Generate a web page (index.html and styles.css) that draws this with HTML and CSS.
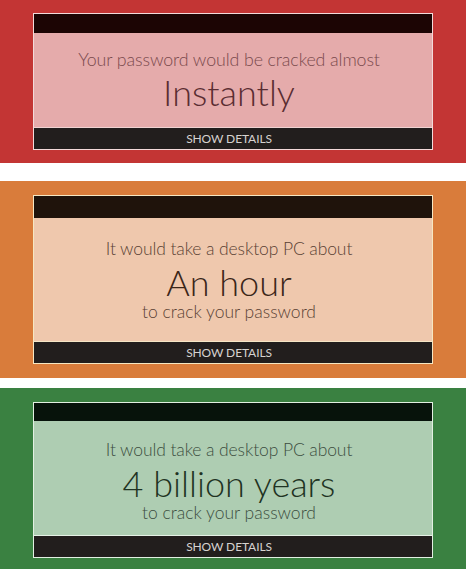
FILE: index.html
```html
<!DOCTYPE html>
<html>
<head>
<meta charset="utf-8">
<link rel="stylesheet" href="styles.css">
</head>
<body>
<section class="band band-red">
  <div class="card">
    <div class="card-top"></div>
    <div class="card-body">
      <p class="lead">Your password would be cracked almost</p>
      <p class="big">Instantly</p>
    </div>
    <div class="card-foot">SHOW DETAILS</div>
  </div>
</section>
<section class="band band-orange">
  <div class="card">
    <div class="card-top"></div>
    <div class="card-body">
      <p class="lead">It would take a desktop PC about</p>
      <p class="big">An hour</p>
      <p class="tail">to crack your password</p>
    </div>
    <div class="card-foot">SHOW DETAILS</div>
  </div>
</section>
<section class="band band-green">
  <div class="card">
    <div class="card-top"></div>
    <div class="card-body">
      <p class="lead">It would take a desktop PC about</p>
      <p class="big">4 billion years</p>
      <p class="tail">to crack your password</p>
    </div>
    <div class="card-foot">SHOW DETAILS</div>
  </div>
</section>
</body>
</html>
```

FILE: styles.css
```css
html, body {
  margin: 0;
  padding: 0;
  background: #ffffff;
}
body {
  font-family: "Lato Light", Lato, "Open Sans", sans-serif;
  font-weight: 300;
}
p { margin: 0; }

.band {
  padding-left: 33px;
  box-sizing: border-box;
}
.card {
  width: 400px;
  box-sizing: border-box;
  border: 1px solid #f4dcdc;
}
.card-top { height: 19px; }
.card-body {
  display: flex;
  flex-direction: column;
  align-items: center;
  text-align: center;
  padding-right: 8px;
}
.lead {
  font-size: 17.5px;
  line-height: 24px;
  letter-spacing: -0.1px;
}
.big {
  font-size: 36px;
  line-height: 36px;
  margin-top: 3px;
}
.tail {
  font-size: 17.5px;
  line-height: 22px;
  margin-top: 1px;
}
.card-foot {
  height: 21px;
  line-height: 21px;
  font-size: 12px;
  font-family: Lato, sans-serif;
  font-weight: 400;
  letter-spacing: -0.1px;
  color: #d6d2d0;
  text-align: center;
  padding-right: 8px;
  background: #221e1d;
  border-top: 1px solid #f0d8d8;
}

/* red */
.band-red {
  background: #c33534;
  height: 163px;
  padding-top: 13px;
  margin-bottom: 18px;
}
.band-red .card { border-color: #f3dada; }
.band-red .card-top { background: #1c0504; height: 19px; }
.band-red .card-body {
  background: #e5abab;
  height: 94px;
  box-sizing: border-box;
  padding-top: 14px;
}
.band-red .big { line-height: 43px; margin-top: 0; color: #5a2d32; }
.band-red .lead { color: #7a4a4d; font-size: 17.8px; }
.band-red .card-foot { border-top-color: #f0d2d2; }

/* orange */
.band-orange {
  background: #d97c3b;
  height: 197px;
  padding-top: 14px;
  margin-bottom: 10px;
}
.band-orange .card { border-color: #f6e7c2; }
.band-orange .card-top { background: #1f130b; height: 22px; }
.band-orange .card-body {
  background: #efc8ad;
  height: 123px;
  box-sizing: border-box;
  padding-top: 19px;
}
.band-orange .lead, .band-orange .tail { color: #5a4234; }
.band-orange .big { color: #3b2619; }
.band-orange .card-foot { border-top-color: #f6e6c6; }

/* green */
.band-green {
  background: #3a8141;
  height: 181px;
  padding-top: 14px;
}
.band-green .card { border-color: #e2f0e2; }
.band-green .card-top { background: #07130b; height: 18px; }
.band-green .card-body {
  background: #aecdb2;
  height: 114px;
  box-sizing: border-box;
  padding-top: 17px;
}
.band-green .lead, .band-green .tail { color: #3c4e3f; }
.band-green .big { color: #1f3323; }
.band-green .card-foot { border-top-color: #e6f2e6; }
```
